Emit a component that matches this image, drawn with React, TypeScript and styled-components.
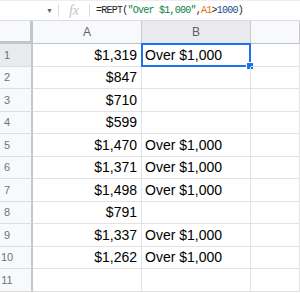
import React from "react";
import styled, { createGlobalStyle } from "styled-components";

const Global = createGlobalStyle`
  html, body { margin: 0; padding: 0; background: #fff; overflow: hidden; }
  body { font-family: "Liberation Sans", Arial, sans-serif; }
`;

const Page = styled.div`
  width: 300px;
  height: 293px;
  overflow: hidden;
  display: flex;
  flex-direction: column;
  background: #fff;
`;

const FormulaBar = styled.div`
  flex: 0 0 auto;
  display: flex;
  align-items: center;
  border-bottom: 1px solid #dadce0;
  border-top: 1px solid #eceef0;
  box-sizing: border-box;
  height: 21px;
`;

const NameBox = styled.div`
  width: 58px;
  display: flex;
  justify-content: flex-end;
  padding-right: 5px;
  box-sizing: border-box;
  color: #5f6368;
  font-size: 7px;
  line-height: 1;
`;

const Divider = styled.div`
  width: 1px;
  height: 13px;
  background: #dadce0;
`;

const Fx = styled.div`
  width: 30px;
  text-align: center;
  font-family: "Liberation Serif", "Times New Roman", serif;
  font-style: italic;
  font-size: 14px;
  color: #c0c3c7;
  line-height: 1;
`;

const Formula = styled.div`
  padding-left: 6px;
  font-family: "Liberation Mono", "DejaVu Sans Mono", monospace;
  font-size: 10px;
  letter-spacing: -0.75px;
  color: #222;
  white-space: nowrap;
`;

const Tok = styled.span<{ $c: string }>`
  color: ${(p) => p.$c};
`;

const Grid = styled.div`
  display: grid;
  grid-template-columns: 33px 109px 109px 1fr;
  grid-template-rows: 23px repeat(11, 22.5px) 1fr;
  flex: 1 1 auto;
`;

const Corner = styled.div`
  background: #f8f9fa;
  border-right: 3px solid #c2c5c9;
  border-bottom: 3px solid #c2c5c9;
  box-sizing: border-box;
`;

const ColHead = styled.div<{ $active?: boolean }>`
  background: ${(p) => (p.$active ? "#e8eaed" : "#f8f9fa")};
  border-right: 1px solid #c8cacd;
  border-bottom: 1px solid #c0c3c7;
  box-sizing: border-box;
  display: flex;
  align-items: center;
  justify-content: center;
  color: #5f6368;
  font-size: 12px;
`;

const RowHead = styled.div<{ $active?: boolean }>`
  background: ${(p) => (p.$active ? "#e8eaed" : "#f8f9fa")};
  border-right: 2px solid #c4c7ca;
  border-bottom: 1px solid #dcdee1;
  box-sizing: border-box;
  display: flex;
  align-items: center;
  justify-content: center;
  padding-right: 17px;
  color: #6f7378;
  font-size: 11px;
`;

const Cell = styled.div<{ $align?: "left" | "right" }>`
  position: relative;
  border-right: 1px solid #e2e3e5;
  border-bottom: 1px solid #e2e3e5;
  box-sizing: border-box;
  display: flex;
  align-items: flex-end;
  justify-content: ${(p) => (p.$align === "right" ? "flex-end" : "flex-start")};
  padding: 0 4px 3px 3px;
  font-size: 14px;
  color: #000;
  white-space: nowrap;
  line-height: 16px;
`;

const Selection = styled.div`
  position: absolute;
  left: -1px;
  top: -1px;
  right: -1px;
  bottom: -1px;
  border: 2px solid #1a73e8;
  pointer-events: none;
`;

const Handle = styled.div`
  position: absolute;
  right: -5px;
  bottom: -5px;
  width: 6px;
  height: 6px;
  background: #1a73e8;
  border: 1px solid #fff;
`;

const values = [1319, 847, 710, 599, 1470, 1371, 1498, 791, 1337, 1262];
const fmt = (n: number) => "$" + n.toLocaleString("en-US");

export default function App() {
  return (
    <Page>
      <Global />
      <FormulaBar>
        <NameBox>▼</NameBox>
        <Divider />
        <Fx>fx</Fx>
        <Divider />
        <Formula>
          <Tok $c="#222">=REPT(</Tok>
          <Tok $c="#0b8043">"Over $1,000"</Tok>
          <Tok $c="#222">,</Tok>
          <Tok $c="#e37400">A1</Tok>
          <Tok $c="#222">&gt;</Tok>
          <Tok $c="#1a4c8c">1000</Tok>
          <Tok $c="#222">)</Tok>
        </Formula>
      </FormulaBar>
      <Grid>
        <Corner />
        <ColHead>A</ColHead>
        <ColHead $active>B</ColHead>
        <ColHead />
        {Array.from({ length: 11 }).map((_, i) => {
          const v = values[i];
          return (
            <React.Fragment key={i}>
              <RowHead $active={i === 0}>{i + 1}</RowHead>
              <Cell $align="right">{v !== undefined ? fmt(v) : ""}</Cell>
              <Cell>
                {v !== undefined && v > 1000 ? "Over $1,000" : ""}
                {i === 0 && (
                  <Selection>
                    <Handle />
                  </Selection>
                )}
              </Cell>
              <Cell />
            </React.Fragment>
          );
        })}
      </Grid>
    </Page>
  );
}
